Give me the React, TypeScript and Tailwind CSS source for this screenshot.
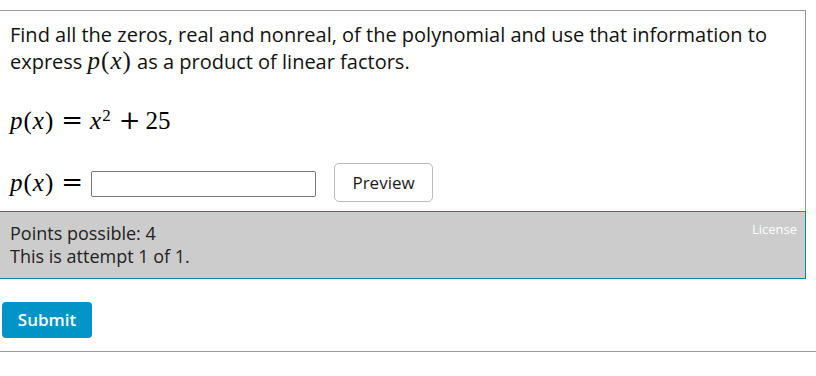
import React from "react";

const ui = { fontFamily: '"Open Sans", "Liberation Sans", sans-serif' };
const mathFont = { fontFamily: '"Liberation Serif", "DejaVu Serif", serif' };
const opFont = { fontFamily: '"DejaVu Serif", "Liberation Serif", serif' };

function V({ children }: { children: React.ReactNode }) {
  return <i className="italic">{children}</i>;
}

// p(x) in math type
function Px() {
  return (
    <span className="whitespace-nowrap tracking-[1px]" style={mathFont}>
      <V>p</V>(<V>x</V>)
    </span>
  );
}

export default function App() {
  return (
    <div className="min-h-[376px] bg-white text-black" style={ui}>
      <div className="h-[10px]" />
      <div className="-ml-px w-[807px]">
        {/* question */}
        <div className="border-t border-r border-l border-[#999] px-[10px] pt-[10px] pb-[9px]">
          <p className="text-[20px] leading-[27px] text-[#111]">
            Find all the zeros, real and nonreal, of the polynomial and use that information to express{" "}
            <span className="text-[25px] leading-[20px]">
              <Px />
            </span>{" "}
            as a product of linear factors.
          </p>

          <div className="mt-[31px] flex h-[28px] items-baseline text-[25px] leading-[28px]" style={mathFont}>
            <Px />
            <span className="ml-[7px] text-[26px]" style={opFont}>=</span>
            <span className="ml-[7px]">
              <V>x</V>
              <sup className="text-[17px] -top-[0.45em] ml-px">2</sup>
            </span>
            <span className="ml-[8px] text-[26px]" style={opFont}>+</span>
            <span className="ml-[5px]">25</span>
          </div>

          <div className="mt-[29px] flex items-start">
            <div className="mt-[5px] flex h-[28px] items-baseline text-[25px] leading-[28px]" style={mathFont}>
              <Px />
              <span className="ml-[7px] text-[26px]" style={opFont}>=</span>
            </div>
            <input
              type="text"
              className="mt-[8px] ml-[8px] h-[26px] w-[225px] rounded-[2px] border border-[#767676] bg-white px-1 text-[16px]"
            />
            <button
              type="button"
              className="ml-[18px] h-[39px] w-[99px] rounded-[5px] border border-[#bbb] bg-white text-[17px] text-[#1a1a1a]"
            >
              Preview
            </button>
          </div>
        </div>

        {/* info band */}
        <div className="flex items-start justify-between border border-[#0a84a6] bg-[#cccccc] pt-[10px] pr-[8px] pb-[10px] pl-[10px]">
          <div className="text-[18px] leading-[23px] text-[#222]">
            <div>Points possible: 4</div>
            <div>This is attempt 1 of 1.</div>
          </div>
          <div className="-mt-px text-[13px] leading-[16px] text-white">License</div>
        </div>
      </div>

      <div className="pt-[23px] pl-[2px]">
        <button
          type="button"
          className="h-[36px] w-[90px] rounded-[4px] bg-[#0095c6] text-[17px] font-semibold text-white"
        >
          Submit
        </button>
      </div>
      <div className="mt-[13px] h-px w-full bg-[#999]" />
    </div>
  );
}
